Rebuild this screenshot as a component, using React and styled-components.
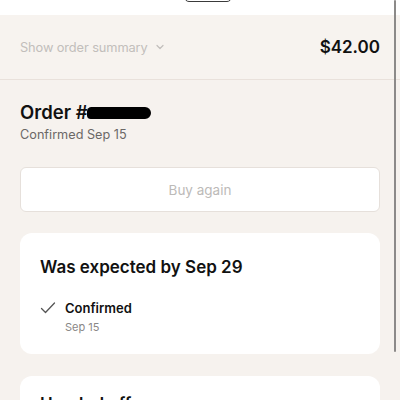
import React from "react";
import styled, { createGlobalStyle } from "styled-components";

const Global = createGlobalStyle`
  html, body { margin: 0; padding: 0; }
  body {
    background: #f6f2ee;
    font-family: Inter, "Noto Sans", "Liberation Sans", sans-serif;
    -webkit-font-smoothing: antialiased;
  }
  #root { width: 400px; height: 400px; overflow: hidden; position: relative; }
`;

const Page = styled.div`
  width: 400px;
  height: 400px;
  overflow: hidden;
  background: #f6f2ee;
  position: relative;
`;

const TopBar = styled.header`
  height: 15px;
  background: #ffffff;
  display: flex;
  justify-content: center;
  align-items: flex-end;
  overflow: hidden;
`;

const LogoBox = styled.div`
  width: 48px;
  height: 12px;
  margin-bottom: 13px;
  margin-left: 16px;
  border: 1.5px solid #3a3a3a;
  border-radius: 5px;
  box-sizing: border-box;
`;

const SummaryBar = styled.div`
  height: 64px;
  background: #f7f3ef;
  border-bottom: 1.5px solid #e9e1db;
  display: flex;
  align-items: center;
  justify-content: space-between;
  padding: 0 20px;
`;

const SummaryToggle = styled.div`
  display: flex;
  align-items: center;
  gap: 7px;
  color: #c2bebb;
  font-size: 12.8px;
  letter-spacing: -0.1px;
`;

const Total = styled.div`
  font-size: 17px;
  font-weight: 600;
  color: #111;
`;

const Content = styled.main`
  padding: 20px 20px 0;
  display: flex;
  flex-direction: column;
`;

const OrderTitle = styled.h1`
  margin: 0;
  font-size: 18.5px;
  font-weight: 600;
  color: #111;
  display: flex;
  align-items: center;
  line-height: 24px;
`;

const Redact = styled.span`
  display: inline-block;
  width: 64px;
  height: 12px;
  background: #000;
  border-radius: 6px 8px 8px 5px;
  margin-left: -1px;
  margin-top: 2px;
`;

const SubText = styled.div`
  font-size: 12.7px;
  color: #6b6866;
  margin-top: 3px;
`;

const BuyButton = styled.button`
  margin-top: 25px;
  height: 45px;
  background: #fff;
  border: 1px solid #e6e0db;
  border-radius: 6px;
  font-family: inherit;
  font-size: 13.5px;
  color: #bcbab8;
`;

const Card = styled.section`
  background: #fff;
  border-radius: 12px;
  padding: ${p => p.$pad || "23px 20px 20px"};
  margin-top: ${p => p.$mt || "21px"};
`;

const CardTitle = styled.h2`
  margin: 0;
  font-size: 17px;
  font-weight: 600;
  color: #111;
  line-height: 22px;
`;

const Step = styled.div`
  display: flex;
  gap: 9px;
  margin-top: 22px;
`;

const StepText = styled.div`
  display: flex;
  flex-direction: column;
`;

const StepLabel = styled.div`
  font-size: 13px;
  font-weight: 600;
  color: #111;
  line-height: 16px;
`;

const StepDate = styled.div`
  font-size: 11px;
  color: #8a8786;
  margin-top: 4px;
`;

const ScrollIndicator = styled.div`
  position: absolute;
  top: 0;
  right: 4px;
  width: 2px;
  height: 352px;
  background: #8c8a89;
  border-radius: 1px;
`;

export default function App() {
  return (
    <Page>
      <Global />
      <TopBar>
        <LogoBox />
      </TopBar>
      <SummaryBar>
        <SummaryToggle>
          Show order summary
          <svg width="10" height="10" viewBox="0 0 10 10" fill="none">
            <path d="M2 3.5 L5 6.5 L8 3.5" stroke="#c2bebb" strokeWidth="1.2" strokeLinecap="round" strokeLinejoin="round" />
          </svg>
        </SummaryToggle>
        <Total>$42.00</Total>
      </SummaryBar>
      <Content>
        <OrderTitle>
          Order #<Redact />
        </OrderTitle>
        <SubText>Confirmed Sep 15</SubText>
        <BuyButton>Buy again</BuyButton>
        <Card>
          <CardTitle>Was expected by Sep 29</CardTitle>
          <Step>
            <svg width="16" height="16" viewBox="0 0 16 16" fill="none">
              <path d="M1.5 8.5 L5.5 12.5 L14.5 3" stroke="#555" strokeWidth="1.3" strokeLinecap="round" strokeLinejoin="round" />
            </svg>
            <StepText>
              <StepLabel>Confirmed</StepLabel>
              <StepDate>Sep 15</StepDate>
            </StepText>
          </Step>
        </Card>
        <Card $mt="22px" $pad="17px 20px 20px">
          <CardTitle>Handed off</CardTitle>
        </Card>
      </Content>
      <ScrollIndicator />
    </Page>
  );
}
